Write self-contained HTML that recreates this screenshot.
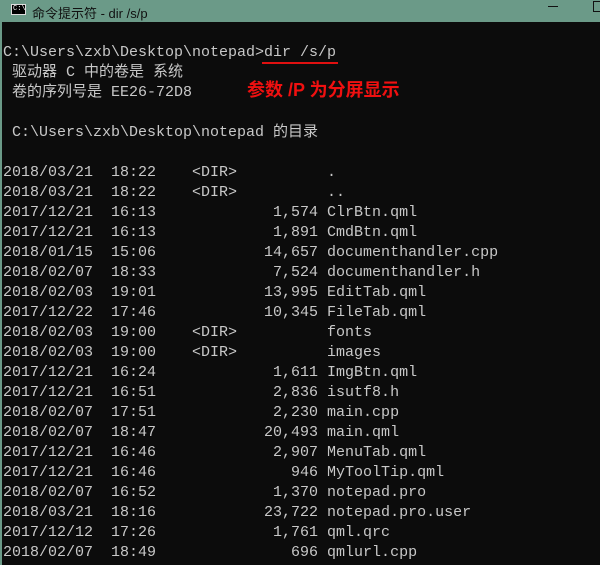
<!DOCTYPE html>
<html><head><meta charset="utf-8"><style>
html,body{margin:0;padding:0;width:600px;height:565px;overflow:hidden;background:#0c0c0c}
#title{position:absolute;left:0;top:0;width:600px;height:22px;background:#6b9a88}
#title .t{position:absolute;left:32px;top:3px;font:13px "Liberation Sans","Noto Sans CJK SC",sans-serif;color:#111}
#icon{position:absolute;left:11px;top:4px;width:15px;height:11px;background:#000;border:1px solid #ddd;box-sizing:border-box;color:#fff;font:7px "Liberation Mono",monospace;line-height:9px;padding-left:1px}
#min{position:absolute;left:548px;top:6px;width:10px;height:1px;background:#111}
#max{position:absolute;left:593px;top:1px;width:10px;height:9px;border:1px solid #111}
#lb{position:absolute;left:0;top:22px;width:2px;height:543px;background:#6b9a88}
pre{position:absolute;left:3px;top:43px;margin:0;font:15px/20px "Liberation Mono","Noto Sans CJK SC",monospace;color:#c8c8c8}
#ann{position:absolute;left:247px;top:76px;font:bold 18px "Liberation Sans","Noto Sans CJK SC",sans-serif;color:#f01010}
#ul{position:absolute;left:262px;top:62px;width:76px;height:2px;background:#e01010}
</style></head><body>
<div id="title"><div id="icon">C:\</div><span class="t">命令提示符 - dir  /s/p</span><div id="min"></div><div id="max"></div></div>
<div id="lb"></div>
<pre>C:\Users\zxb\Desktop\notepad&gt;dir /s/p
 驱动器 C 中的卷是 系统
 卷的序列号是 EE26-72D8

 C:\Users\zxb\Desktop\notepad 的目录

2018/03/21  18:22    &lt;DIR&gt;          .
2018/03/21  18:22    &lt;DIR&gt;          ..
2017/12/21  16:13             1,574 ClrBtn.qml
2017/12/21  16:13             1,891 CmdBtn.qml
2018/01/15  15:06            14,657 documenthandler.cpp
2018/02/07  18:33             7,524 documenthandler.h
2018/02/03  19:01            13,995 EditTab.qml
2017/12/22  17:46            10,345 FileTab.qml
2018/02/03  19:00    &lt;DIR&gt;          fonts
2018/02/03  19:00    &lt;DIR&gt;          images
2017/12/21  16:24             1,611 ImgBtn.qml
2017/12/21  16:51             2,836 isutf8.h
2018/02/07  17:51             2,230 main.cpp
2018/02/07  18:47            20,493 main.qml
2017/12/21  16:46             2,907 MenuTab.qml
2017/12/21  16:46               946 MyToolTip.qml
2018/02/07  16:52             1,370 notepad.pro
2018/03/21  18:16            23,722 notepad.pro.user
2017/12/12  17:26             1,761 qml.qrc
2018/02/07  18:49               696 qmlurl.cpp</pre>
<div id="ul"></div>
<div id="ann">参数 /P 为分屏显示</div>
</body></html>
